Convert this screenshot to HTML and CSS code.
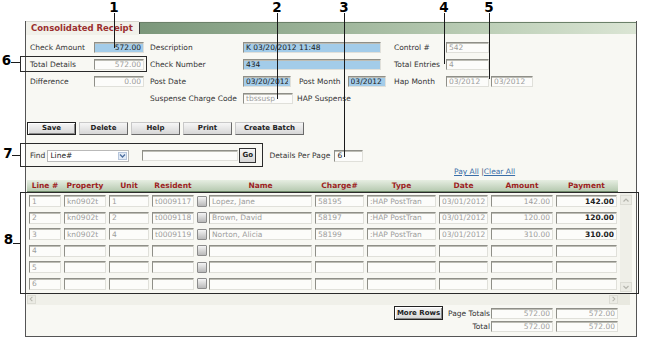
FILE: index.html
```html
<!DOCTYPE html>
<html>
<head>
<meta charset="utf-8">
<title>Consolidated Receipt</title>
<link rel="stylesheet" href="styles.css">
</head>
<body>
<div class="page">
  <div class="panel">
    <div class="tabbar">
      <div class="tab">Consolidated Receipt</div>
      <div class="bar"></div>
    </div>

    <div class="fields">
      <label>Check Amount</label>
      <div><input class="in blue num w50" value="572.00" readonly></div>
      <label>Description</label>
      <div><input class="in blue w138" value="K 03/20/2012 11:48" readonly></div>
      <label>Control #</label>
      <div><input class="in w43" value="542" readonly></div>
      <div></div>

      <label>Total Details</label>
      <div><input class="in num w50" value="572.00" readonly></div>
      <label>Check Number</label>
      <div><input class="in blue w138" value="434" readonly></div>
      <label>Total Entries</label>
      <div><input class="in w43" value="4" readonly></div>
      <div></div>

      <label>Difference</label>
      <div><input class="in num w50" value="0.00" readonly></div>
      <label>Post Date</label>
      <div class="pair">
        <input class="in blue w48" value="03/20/2012" readonly>
        <span class="pm">Post Month</span>
        <input class="in blue w38" value="03/2012" readonly>
      </div>
      <label>Hap Month</label>
      <div><input class="in w43" value="03/2012" readonly></div>
      <div><input class="in w42" value="03/2012" readonly></div>

      <div></div>
      <div></div>
      <label>Suspense Charge Code</label>
      <div class="pair">
        <input class="in w50" value="tbssusp" readonly>
        <span class="hs">HAP Suspense</span>
      </div>
      <div></div>
      <div></div>
      <div></div>
    </div>

    <div class="buttons">
      <button class="btn focus">Save</button>
      <button class="btn">Delete</button>
      <button class="btn">Help</button>
      <button class="btn">Print</button>
      <button class="btn wide">Create Batch</button>
    </div>

    <div class="find">
      <span>Find</span>
      <div class="select">
        <span>Line#</span>
        <span class="arrow"><svg width="7" height="6" viewBox="0 0 7 6"><polyline points="1,1.5 3.5,4 6,1.5" fill="none" stroke="#4d6f9f" stroke-width="1.3"/></svg></span>
      </div>
      <input class="in findin" value="" readonly>
      <button class="btn go">Go</button>
      <span class="dpp">Details Per Page</span>
      <input class="in dark dppin" value="6" readonly>
    </div>

    <div class="links"><a href="#">Pay All</a> |<a href="#">Clear All</a></div>

    <div class="table">
      <div class="thead">
        <span>Line #</span><span>Property</span><span>Unit</span><span>Resident</span><span></span>
        <span>Name</span><span>Charge#</span><span>Type</span><span>Date</span><span>Amount</span><span>Payment</span>
      </div>
      <div class="tbody">
        <div class="rows">
          <input class="in" value="1" readonly><input class="in" value="kn0902t" readonly><input class="in" value="1" readonly><input class="in" value="t0009117" readonly><span class="rbtn"></span><input class="in" value="Lopez, Jane" readonly><input class="in" value="58195" readonly><input class="in" value=":HAP PostTran" readonly><input class="in" value="03/01/2012" readonly><input class="in num" value="142.00" readonly><input class="in num pay" value="142.00" readonly>

          <input class="in" value="2" readonly><input class="in" value="kn0902t" readonly><input class="in" value="2" readonly><input class="in" value="t0009118" readonly><span class="rbtn"></span><input class="in" value="Brown, David" readonly><input class="in" value="58197" readonly><input class="in" value=":HAP PostTran" readonly><input class="in" value="03/01/2012" readonly><input class="in num" value="120.00" readonly><input class="in num pay" value="120.00" readonly>

          <input class="in" value="3" readonly><input class="in" value="kn0902t" readonly><input class="in" value="4" readonly><input class="in" value="t0009119" readonly><span class="rbtn"></span><input class="in" value="Norton, Alicia" readonly><input class="in" value="58199" readonly><input class="in" value=":HAP PostTran" readonly><input class="in" value="03/01/2012" readonly><input class="in num" value="310.00" readonly><input class="in num pay" value="310.00" readonly>

          <input class="in" value="4" readonly><input class="in" readonly><input class="in" readonly><input class="in" readonly><span class="rbtn"></span><input class="in" readonly><input class="in" readonly><input class="in" readonly><input class="in" readonly><input class="in" readonly><input class="in" readonly>

          <input class="in" value="5" readonly><input class="in" readonly><input class="in" readonly><input class="in" readonly><span class="rbtn"></span><input class="in" readonly><input class="in" readonly><input class="in" readonly><input class="in" readonly><input class="in" readonly><input class="in" readonly>

          <input class="in" value="6" readonly><input class="in" readonly><input class="in" readonly><input class="in" readonly><span class="rbtn"></span><input class="in" readonly><input class="in" readonly><input class="in" readonly><input class="in" readonly><input class="in" readonly><input class="in" readonly>
        </div>
        <div class="vscroll">
          <span class="sbtn"><svg width="10" height="8" viewBox="0 0 10 8"><polyline points="2.5,5.5 5,3 7.5,5.5" fill="none" stroke="#b4b4ac" stroke-width="1.2"/></svg></span>
          <span class="sbtn"><svg width="10" height="8" viewBox="0 0 10 8"><polyline points="2.5,3 5,5.5 7.5,3" fill="none" stroke="#b4b4ac" stroke-width="1.2"/></svg></span>
        </div>
      </div>
      <div class="hscroll">
        <span class="hbtn"><svg width="8" height="8" viewBox="0 0 8 8"><polyline points="5,1.5 2.5,4 5,6.5" fill="none" stroke="#b4b4ac" stroke-width="1.2"/></svg></span>
        <span class="track"></span>
        <span class="hbtn"><svg width="8" height="8" viewBox="0 0 8 8"><polyline points="3,1.5 5.5,4 3,6.5" fill="none" stroke="#b4b4ac" stroke-width="1.2"/></svg></span>
        <span class="corner"></span>
      </div>
    </div>

    <div class="totals">
      <div></div>
      <button class="btn focus more">More Rows</button>
      <span class="tl">Page Totals</span>
      <input class="in num w62" value="572.00" readonly>
      <input class="in num w62" value="572.00" readonly>
      <div></div>
      <div></div>
      <span class="tl">Total</span>
      <input class="in num w62" value="572.00" readonly>
      <input class="in num w62" value="572.00" readonly>
    </div>
  </div>

  <span class="num-mark n1">1</span><span class="vline l1"></span>
  <span class="num-mark n2">2</span><span class="vline l2"></span>
  <span class="num-mark n3">3</span><span class="vline l3"></span>
  <span class="num-mark n4">4</span><span class="vline l4"></span>
  <span class="num-mark n5">5</span><span class="vline l5"></span>
  <span class="num-mark n6">6</span><span class="hline h6"></span><span class="box b6"></span>
  <span class="num-mark n7">7</span><span class="hline h7"></span><span class="box b7"></span>
  <span class="num-mark n8">8</span><span class="hline h8"></span><span class="box b8"></span>
</div>
</body>
</html>
```

FILE: styles.css
```css
* { box-sizing: border-box; }
html, body { margin: 0; padding: 0; background: #ffffff; }
body {
  font-family: "DejaVu Sans", Verdana, sans-serif;
  font-size: 7.5px;
  color: #333333;
}

.page {
  position: relative;
  width: 646px;
  height: 340px;
  padding: 21px 0 0 25px;
}

.panel {
  width: 612px;
  height: 316px;
  border: 1px solid #555555;
  border-top: 0;
  background: #f8f8f3;
  display: flex;
  flex-direction: column;
}

/* tab bar */
.tabbar { display: flex; height: 14px; }
.tab {
  width: 113px;
  background: #f1f1ea;
  border-top: 1px solid #d6d6cf;
  color: #9b2f2f;
  font-weight: bold;
  font-size: 8.5px;
  line-height: 13px;
  padding-left: 5px;
  white-space: nowrap;
}
.bar {
  flex: 1;
  margin-top: 1px;
  height: 12px;
  border-left: 1px solid #3a3a3a;
  border-top: 1px solid #6b8069;
  background: linear-gradient(90deg, #7b977a 0%, #9fb69b 40%, #c2d3bc 75%, #dbe5d4 100%);
}

/* inputs */
.in {
  display: block;
  height: 11px;
  margin: 0;
  padding: 0 2px;
  border: 1px solid;
  border-color: #8f8f88 #e0e0da #e0e0da #8f8f88;
  box-shadow: inset 0 1px 0 #bdbdb5;
  background: #fcfcfa;
  font-family: "DejaVu Sans", Verdana, sans-serif;
  font-size: 7.5px;
  color: #9c9c9c;
  outline: none;
  -webkit-appearance: none;
  appearance: none;
}
.in.blue { background: #a3cce9; color: #1c1c1c; }
.in.dark { color: #222222; }
.num { text-align: right; }
.w38 { width: 38px; }
.w42 { width: 42px; }
.w43 { width: 43px; }
.w48 { width: 48px; }
.w50 { width: 50px; }
.w62 { width: 62px; }
.w138 { width: 138px; }

/* header fields */
.fields {
  display: grid;
  grid-template-columns: 64px 56px 93px 151px 52px 45px 41px;
  grid-auto-rows: 17px;
  align-items: center;
  margin-top: 4px;
  padding-left: 4px;
  white-space: nowrap;
}
.pair { display: flex; align-items: center; }
.pm { margin: 0 7px 0 8px; }
.hs { margin-left: 4px; }

/* buttons */
.buttons {
  display: flex;
  gap: 3px;
  margin-top: 15px;
  padding-left: 1px;
}
.btn {
  width: 49px;
  height: 13px;
  margin: 0;
  padding: 0;
  border: 1px solid;
  border-color: #c8c8c8 #6a6a6a #6a6a6a #c8c8c8;
  background: linear-gradient(#f6f6f6, #d6d6d6);
  font-family: "DejaVu Sans", Verdana, sans-serif;
  font-size: 7px;
  font-weight: bold;
  color: #222222;
  line-height: 11px;
  white-space: nowrap;
}
.btn.focus { border: 1px solid #222222; box-shadow: inset 1px 1px 0 #ffffff, inset -1px -1px 0 #8a8a8a; }
.btn.wide { width: 69px; }

/* find row */
.find {
  display: flex;
  align-items: center;
  height: 17px;
  margin-top: 12px;
  padding-left: 4px;
  white-space: nowrap;
}
.select {
  margin-left: 2px;
  width: 82px;
  height: 12px;
  border: 1px solid #b9b9b9;
  background: #ffffff;
  display: flex;
  align-items: center;
  padding-left: 2px;
  color: #222222;
}
.select .arrow {
  margin-left: auto;
  margin-right: 1px;
  width: 9px;
  height: 8px;
  border: 1px solid #b7c6dc;
  background: #e3ebf6;
  display: flex;
  align-items: center;
  justify-content: center;
}
.findin { margin-left: 13px; width: 96px; height: 11px; }
.go { margin-left: 1px; width: 17px; height: 15px; border: 1px solid #333333; }
.dpp { margin-left: 13px; width: 65px; }
.dppin { width: 29px; height: 12px; }

/* links */
.links {
  height: 10px;
  margin-top: 3px;
  padding-left: 428px;
  line-height: 10px;
  color: #555555;
  white-space: nowrap;
}
.links a { color: #3b6ea8; text-decoration: underline; }

/* grid table */
.table { margin-top: 3px; margin-left: 1px; }
.thead {
  display: grid;
  grid-template-columns: 35px 45px 43px 45px 12px 106px 52px 72px 52px 65px 64px;
  align-items: center;
  width: 591px;
  height: 12px;
  padding-left: 2px;
  background: linear-gradient(#e6eee2, #b7cab1);
  border-bottom: 1px solid #6f8a6a;
  white-space: nowrap;
}
.thead span {
  width: calc(100% - 3px);
  text-align: center;
  font-weight: bold;
  color: #9d1f1f;
  line-height: 11px;
}
.tbody { display: flex; margin-top: 1px; }
.rows {
  display: grid;
  grid-template-columns: 35px 45px 43px 45px 12px 106px 52px 72px 52px 65px 64px;
  grid-auto-rows: 16.5px;
  align-items: center;
  width: 593px;
  padding-left: 2px;
}
.rows .in { width: calc(100% - 3px); height: 12px; }
.rows .pay { color: #222222; font-weight: bold; }
.rbtn {
  display: block;
  width: 10px;
  height: 11px;
  border: 1px solid #8c8c8c;
  border-radius: 1px;
  background: linear-gradient(#f4f4f4, #b9b9b9);
}
.vscroll {
  width: 12px;
  background: #efefe8;
  display: flex;
  flex-direction: column;
  justify-content: space-between;
  padding-top: 2px;
}
.sbtn {
  width: 12px;
  height: 10px;
  border: 1px solid #dcdcd4;
  background: #ebebe4;
  display: flex;
  align-items: center;
  justify-content: center;
}
.hscroll {
  display: flex;
  width: 603px;
  height: 12px;
  margin-top: 1px;
  background: #f0f0e9;
  align-items: center;
}
.hbtn {
  width: 9px;
  height: 9px;
  border: 1px solid #dcdcd4;
  background: #ebebe4;
  display: flex;
  align-items: center;
  justify-content: center;
}
.track { flex: 1; }
.corner { width: 12px; height: 12px; background: #e9e9e0; }

/* totals */
.totals {
  display: grid;
  grid-template-columns: 368px 49px 48px 65px 62px;
  grid-template-rows: 14px 13px;
  align-items: center;
  margin-top: 1px;
}
.more { width: 49px; height: 14px; }
.tl { text-align: right; padding-right: 1px; white-space: nowrap; color: #333333; }

/* annotations */
.num-mark {
  position: absolute;
  width: 10px;
  text-align: center;
  font-family: "DejaVu Sans", Verdana, sans-serif;
  font-weight: bold;
  font-size: 13.5px;
  line-height: 13.5px;
  color: #000000;
}
.vline { position: absolute; width: 1px; background: #1a1a1a; top: 13px; }
.hline { position: absolute; height: 1px; background: #1a1a1a; }
.box { position: absolute; border: 1px solid #2a2a2a; }

.n1 { left: 109px; top: 0.5px; }
.n2 { left: 272px; top: 0.5px; }
.n3 { left: 339px; top: 0.5px; }
.n4 { left: 439px; top: 0.5px; }
.n5 { left: 484px; top: 0.5px; }
.l1 { left: 114px; height: 35px; }
.l2 { left: 277px; height: 86px; }
.l3 { left: 344px; height: 144px; }
.l4 { left: 444px; height: 51px; }
.l5 { left: 489px; height: 66px; }

.n6 { left: 1.5px; top: 53.5px; }
.n7 { left: 3px; top: 146.5px; }
.n8 { left: 3.5px; top: 232.5px; }
.h6 { left: 11px; top: 62px; width: 9px; }
.h7 { left: 12px; top: 155px; width: 8px; }
.h8 { left: 13px; top: 243px; width: 7px; }
.b6 { left: 20px; top: 56px; width: 127px; height: 16px; }
.b7 { left: 20px; top: 143px; width: 243px; height: 24px; }
.b8 { left: 20px; top: 192px; width: 619px; height: 102px; }
```
